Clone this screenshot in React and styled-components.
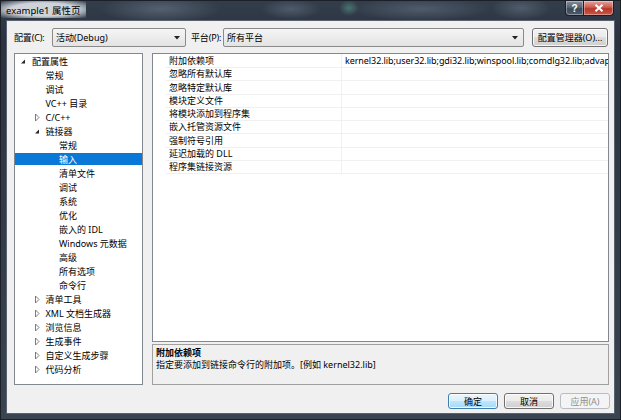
import React from 'react';
import styled, { createGlobalStyle } from 'styled-components';

const UI_FONT = `"Noto Sans", "Noto Sans CJK SC", sans-serif`;

const GlobalStyle = createGlobalStyle`
  html, body {
    margin: 0;
    padding: 0;
    background: #2c3440;
  }
  body {
    font-family: ${UI_FONT};
    font-size: 9px;
    color: #000;
  }
`;

const Window = styled.div`
  width: 621px;
  height: 420px;
  box-sizing: border-box;
  display: flex;
  flex-direction: column;
  border: 1px solid #1b2028;
  background:
    radial-gradient(ellipse 60px 14px at 160px 8px, rgba(150, 165, 185, 0.35), transparent),
    radial-gradient(ellipse 30px 10px at 290px 8px, rgba(150, 165, 185, 0.3), transparent),
    radial-gradient(ellipse 10px 8px at 348px 7px, rgba(110, 200, 170, 0.4), transparent),
    radial-gradient(ellipse 70px 12px at 420px 8px, rgba(150, 165, 185, 0.3), transparent),
    radial-gradient(ellipse 30px 12px at 520px 7px, rgba(150, 165, 185, 0.3), transparent),
    linear-gradient(#333d4b, #2a333f 40px, #3a4350);
`;

const TitleBar = styled.div`
  height: 19px;
  display: flex;
  align-items: flex-start;
  padding: 0 6px 0 4px;
`;

const Title = styled.div`
  height: 17px;
  display: flex;
  align-items: center;
  padding: 0 6px 0 5px;
  margin-left: -4px;
  font-size: 9.5px;
  color: #000;
  background: radial-gradient(ellipse at center, rgba(215, 220, 226, 0.95) 55%, rgba(215, 220, 226, 0) 100%);
`;

const CaptionButtons = styled.div`
  margin-left: auto;
  display: flex;
`;

const CaptionButton = styled.div`
  height: 15px;
  width: ${p => (p.$close ? 30 : 19)}px;
  box-sizing: border-box;
  display: flex;
  align-items: center;
  justify-content: center;
  border: 1px solid #1a1f26;
  border-top: none;
  border-left: ${p => (p.$close ? 'none' : '1px solid #1a1f26')};
  border-radius: ${p => (p.$close ? '0 0 4px 0' : '0 0 0 4px')};
  color: #fff;
  font-family: "Liberation Sans", sans-serif;
  font-weight: bold;
  font-size: 10px;
  background: ${p =>
    p.$close
      ? 'linear-gradient(#e3a59d, #cc5a4e 45%, #b8372b 55%, #c5594a)'
      : 'linear-gradient(rgba(200,210,225,0.55), rgba(120,135,155,0.45) 50%, rgba(70,85,105,0.5) 55%, rgba(110,125,145,0.5))'};
  box-shadow: inset 0 0 0 1px rgba(255, 255, 255, 0.35);
`;

const FrameBody = styled.div`
  flex: 1;
  display: flex;
  padding: 0 5px 5px;
  min-height: 0;
`;

const Client = styled.div`
  flex: 1;
  display: flex;
  flex-direction: column;
  background: #f0f0f0;
  border: 1px solid #59626e;
  padding: 7px 5px 0 7px;
`;

const TopRow = styled.div`
  height: 19px;
  display: flex;
  align-items: center;
`;

const FieldLabel = styled.div`
  width: ${p => p.$w}px;
  margin-left: ${p => p.$ml || 0}px;
  white-space: nowrap;
  letter-spacing: -0.15px;
`;

const Combo = styled.div`
  width: ${p => p.$w}px;
  height: 19px;
  box-sizing: border-box;
  display: flex;
  align-items: center;
  padding: 0 5px 0 3px;
  border: 1px solid #8a8a8a;
  border-radius: 2px;
  background: linear-gradient(#f5f5f5, #ececec 50%, #e3e3e3);
`;

const ComboText = styled.span`
  flex: 1;
`;

const DropArrow = () => (
  <svg width="6" height="4" viewBox="0 0 6 4">
    <polygon points="0,0 6,0 3,3.5" fill="#222" />
  </svg>
);

const PushButton = styled.div`
  width: ${p => p.$w}px;
  height: ${p => p.$h || 19}px;
  margin-left: ${p => p.$ml || 0}px;
  box-sizing: border-box;
  display: flex;
  align-items: center;
  justify-content: center;
  white-space: nowrap;
  border: 1px solid ${p => (p.$disabled ? '#b9bdc1' : p.$default ? '#3c7fb1' : '#707070')};
  border-radius: 3px;
  color: ${p => (p.$disabled ? '#8d8d8d' : '#000')};
  background: ${p =>
    p.$disabled
      ? '#f4f4f4'
      : p.$default
      ? 'linear-gradient(#eaf6fd, #d9f0fc 50%, #bee6fd 50%, #a7d9f5)'
      : 'linear-gradient(#f2f2f2, #ebebeb 50%, #dddddd 50%, #cfcfcf)'};
  box-shadow: ${p => (p.$disabled ? 'none' : 'inset 0 0 0 1px rgba(255,255,255,0.8)')};
`;

const Main = styled.div`
  margin-top: 6px;
  height: 332px;
  display: flex;
  gap: 9px;
`;

const Tree = styled.div`
  width: 129px;
  box-sizing: border-box;
  border: 1px solid #828790;
  background: #fff;
`;

const TreeRow = styled.div`
  height: 14px;
  display: flex;
  align-items: center;
  padding-left: ${p => 4 + p.$level * 13.5}px;
  color: ${p => (p.$selected ? '#fff' : '#000')};
  background: ${p =>
    p.$selected
      ? 'linear-gradient(transparent 1px, #0a78d6 1px, #0a78d6 13px, transparent 13px)'
      : 'transparent'};
  white-space: nowrap;
`;

const ArrowBox = styled.div`
  width: 13px;
  height: 14px;
  display: flex;
  align-items: center;
`;

const OpenArrow = () => (
  <svg width="8" height="8" viewBox="0 0 8 8">
    <polygon points="6,2.5 6,6.5 2,6.5" fill="#262626" />
  </svg>
);

const ClosedArrow = () => (
  <svg width="8" height="8" viewBox="0 0 8 8">
    <polygon points="2.5,1 6,4.5 2.5,8" fill="#fff" stroke="#6e6e6e" strokeWidth="0.9" />
  </svg>
);

const RightColumn = styled.div`
  flex: 1;
  display: flex;
  flex-direction: column;
  gap: 2px;
  min-width: 0;
`;

const Grid = styled.div`
  height: 289px;
  box-sizing: border-box;
  border: 1px solid #828790;
  background: #fff;
  overflow: hidden;
`;

const GridRow = styled.div`
  height: 13.3px;
  display: grid;
  grid-template-columns: 13px 176px minmax(0, 1fr);
`;

const MarginCell = styled.div``;

const NameCell = styled.div`
  display: flex;
  align-items: center;
  padding-left: 3px;
  border-bottom: 1px solid #f0f0f0;
  border-right: 1px solid #f0f0f0;
  white-space: nowrap;
`;

const ValueCell = styled.div`
  display: flex;
  align-items: center;
  padding-left: 3px;
  border-bottom: 1px solid #f0f0f0;
  white-space: nowrap;
  overflow: hidden;
  letter-spacing: -0.08px;
`;

const Description = styled.div`
  height: 41px;
  box-sizing: border-box;
  border: 1px solid #a0a0a0;
  background: #f0f0f0;
  padding: 2px 3px;
  display: flex;
  flex-direction: column;
`;

const DescTitle = styled.div`
  font-weight: bold;
  line-height: 12px;
`;

const DescText = styled.div`
  line-height: 12px;
`;

const ButtonRow = styled.div`
  margin-top: 8px;
  height: 16px;
  display: flex;
  justify-content: flex-end;
  gap: 6px;
  margin-right: -1px;
`;

const TREE = [
  { label: '配置属性', level: 0, arrow: 'open' },
  { label: '常规', level: 1 },
  { label: '调试', level: 1 },
  { label: 'VC++ 目录', level: 1 },
  { label: 'C/C++', level: 1, arrow: 'closed' },
  { label: '链接器', level: 1, arrow: 'open' },
  { label: '常规', level: 2 },
  { label: '输入', level: 2, selected: true },
  { label: '清单文件', level: 2 },
  { label: '调试', level: 2 },
  { label: '系统', level: 2 },
  { label: '优化', level: 2 },
  { label: '嵌入的 IDL', level: 2 },
  { label: 'Windows 元数据', level: 2 },
  { label: '高级', level: 2 },
  { label: '所有选项', level: 2 },
  { label: '命令行', level: 2 },
  { label: '清单工具', level: 1, arrow: 'closed' },
  { label: 'XML 文档生成器', level: 1, arrow: 'closed' },
  { label: '浏览信息', level: 1, arrow: 'closed' },
  { label: '生成事件', level: 1, arrow: 'closed' },
  { label: '自定义生成步骤', level: 1, arrow: 'closed' },
  { label: '代码分析', level: 1, arrow: 'closed' },
];

const PROPS = [
  ['附加依赖项', 'kernel32.lib;user32.lib;gdi32.lib;winspool.lib;comdlg32.lib;advapi32.lib;shell32.lib;ole32.lib;oleaut32.lib;uuid.lib;odbc32.lib;odbccp32.lib;%(AdditionalDependencies)'],
  ['忽略所有默认库', ''],
  ['忽略特定默认库', ''],
  ['模块定义文件', ''],
  ['将模块添加到程序集', ''],
  ['嵌入托管资源文件', ''],
  ['强制符号引用', ''],
  ['延迟加载的 DLL', ''],
  ['程序集链接资源', ''],
];

export default function App() {
  return (
    <>
      <GlobalStyle />
      <Window>
        <TitleBar>
          <Title>example1 属性页</Title>
          <CaptionButtons>
            <CaptionButton>?</CaptionButton>
            <CaptionButton $close>
              <svg width="10" height="8" viewBox="0 0 10 8">
                <path d="M1.5 0.8 L8.5 7.2 M8.5 0.8 L1.5 7.2" stroke="#fff" strokeWidth="2" />
              </svg>
            </CaptionButton>
          </CaptionButtons>
        </TitleBar>
        <FrameBody>
          <Client>
            <TopRow>
              <FieldLabel $w={38}>配置(C):</FieldLabel>
              <Combo $w={134}>
                <ComboText>活动(Debug)</ComboText>
                <DropArrow />
              </Combo>
              <FieldLabel $w={32} $ml={5}>平台(P):</FieldLabel>
              <Combo $w={301}>
                <ComboText>所有平台</ComboText>
                <DropArrow />
              </Combo>
              <PushButton $w={76} $ml={8}>配置管理器(O)...</PushButton>
            </TopRow>
            <Main>
              <Tree>
                {TREE.map((item, i) => (
                  <TreeRow key={i} $level={item.level} $selected={item.selected}>
                    <ArrowBox>
                      {item.arrow === 'open' && <OpenArrow />}
                      {item.arrow === 'closed' && <ClosedArrow />}
                    </ArrowBox>
                    {item.label}
                  </TreeRow>
                ))}
              </Tree>
              <RightColumn>
                <Grid>
                  {PROPS.map(([name, value]) => (
                    <GridRow key={name}>
                      <MarginCell />
                      <NameCell>{name}</NameCell>
                      <ValueCell>{value}</ValueCell>
                    </GridRow>
                  ))}
                </Grid>
                <Description>
                  <DescTitle>附加依赖项</DescTitle>
                  <DescText>指定要添加到链接命令行的附加项。[例如 kernel32.lib]</DescText>
                </Description>
              </RightColumn>
            </Main>
            <ButtonRow>
              <PushButton $w={50} $h={16} $default>确定</PushButton>
              <PushButton $w={50} $h={16}>取消</PushButton>
              <PushButton $w={50} $h={16} $disabled>应用(A)</PushButton>
            </ButtonRow>
          </Client>
        </FrameBody>
      </Window>
    </>
  );
}
